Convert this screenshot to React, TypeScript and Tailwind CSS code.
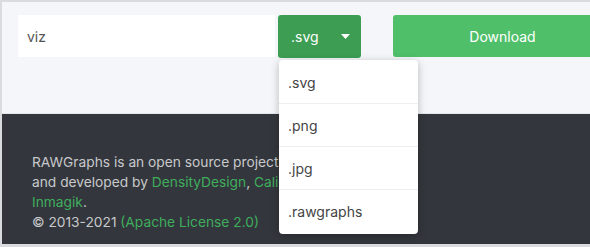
export default function App() {
  const formats = [".svg", ".png", ".jpg", ".rawgraphs"];
  return (
    <div
      className="relative w-[590px] h-[247px] overflow-hidden border-l-2 border-t-2 border-b-[3px] border-[#d9dbde] bg-[#f4f6f9] flex flex-col"
      style={{ fontFamily: "Inter, 'Noto Sans', sans-serif" }}
    >
      <div className="h-[112px] shrink-0 flex items-start pt-[13px] pl-[16px] border-b border-[#e4e7eb]">
        <div className="w-[257px] shrink-0 h-[42px] bg-white flex items-center pl-[9px] text-[14px] text-[#555]">viz</div>
        <div className="relative shrink-0 ml-[3px] w-[83px] h-[43px] rounded-[3px] bg-[#3d9e53] flex items-center pl-[13px] pr-[11px] text-white text-[14px]">
          <span className="flex-1">.svg</span>
          <svg width="9" height="5" viewBox="0 0 9 5">
            <path d="M0 0h9L4.5 5z" fill="#fff" />
          </svg>
          <div className="absolute left-[1px] top-[45px] w-[139px] rounded-[4px] bg-white shadow-[0_2px_8px_rgba(0,0,0,0.25)] py-[1px] flex flex-col">
            {formats.map((f, i) => (
              <div
                key={f}
                className={`h-[43px] flex items-center pl-[9px] text-[14px] text-[#444] ${i < formats.length - 1 ? "border-b border-[#eceef0]" : ""}`}
              >
                {f}
              </div>
            ))}
          </div>
        </div>
        <div className="ml-[32px] w-[219px] shrink-0 h-[42px] rounded-[3px] bg-[#4fbf6a] flex items-center justify-center text-white text-[14px]">
          Download
        </div>
      </div>
      <div className="flex-1 bg-[#33363c] pl-[30px] pt-[38px] text-[13.75px] leading-[20px] text-[#c8c9cb]">
        <p>RAWGraphs is an open source project designed</p>
        <p>
          and developed by <span className="text-[#3fae5c]">DensityDesign</span>,{" "}
          <span className="text-[#3fae5c]">Calibro</span> and
        </p>
        <p>
          <span className="text-[#3fae5c]">Inmagik</span>.
        </p>
        <p>
          © 2013-2021 <span className="text-[#3fae5c]">(Apache License 2.0)</span>
        </p>
      </div>
    </div>
  );
}
